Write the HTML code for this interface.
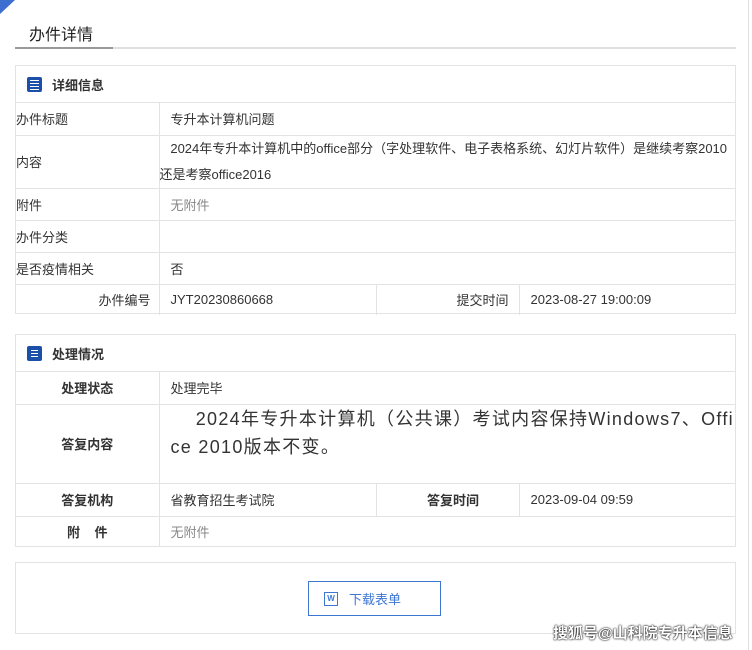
<!DOCTYPE html>
<html><head><meta charset="utf-8"><style>
*{margin:0;padding:0;box-sizing:border-box}
body{width:752px;height:650px;background:#fff;font-family:"Liberation Sans","Noto Sans CJK SC",sans-serif;font-size:13px;color:#333;position:relative;overflow:hidden}
.abs{position:absolute}
.panel{position:absolute;left:15px;width:721px;border:1px solid #e3e3e3}
.hd{height:37px;border-bottom:1px solid #e3e3e3;display:flex;align-items:center;padding-left:11px;font-weight:bold;font-size:13px;color:#333}
.ic{width:15px;height:15px;background:#1b4fa8;border-radius:2px;margin-right:10px;position:relative}
.ic i{position:absolute;left:3px;width:9px;height:1.5px;background:#fff}
table{border-collapse:collapse;width:100%;table-layout:fixed}
td{border-top:1px solid #e3e3e3;border-left:1px solid #e3e3e3;padding:0 0 0 11px;vertical-align:middle}
td:first-child{border-left:none;padding-left:0}
tr:first-child td{border-top:none}
.b td:first-child{font-weight:bold;text-align:center;color:#333}
.g{color:#888}
</style></head><body>
<div class="abs" style="left:0;top:0;width:0;height:0;border-top:14px solid #3d6fd1;border-right:15px solid transparent"></div>
<div class="abs" style="right:3px;top:0;width:1px;height:650px;background:#e0e0e0"></div>
<div class="abs" style="left:29px;top:21px;font-size:16px;color:#222">办件详情</div>
<div class="abs" style="left:15px;top:47px;width:721px;height:2px;background:#e0e0e0"></div>
<div class="abs" style="left:15px;top:47px;width:98px;height:2px;background:#999"></div>

<div class="panel" style="top:65px;height:249px">
<div class="hd"><div class="ic"><i style="top:3px"></i><i style="top:6px"></i><i style="top:9px"></i><i style="top:12px;height:1px"></i></div>详细信息</div>
<table>
<colgroup><col style="width:143px"><col style="width:217px"><col style="width:143px"><col></colgroup>
<tr style="height:32px"><td>办件标题</td><td colspan="3">专升本计算机问题</td></tr>
<tr style="height:51px"><td>内容</td><td colspan="3" style="padding:0;line-height:26px">&nbsp;&nbsp;&nbsp;2024年专升本计算机中的office部分（字处理软件、电子表格系统、幻灯片软件）是继续考察2010还是考察office2016</td></tr>
<tr style="height:32px"><td>附件</td><td colspan="3" class="g">无附件</td></tr>
<tr style="height:32px"><td>办件分类</td><td colspan="3"></td></tr>
<tr style="height:32px"><td>是否疫情相关</td><td colspan="3">否</td></tr>
<tr style="height:31px"><td style="text-align:right;padding-right:8px">办件编号</td><td>JYT20230860668</td><td style="text-align:right;padding-right:10px">提交时间</td><td>2023-08-27 19:00:09</td></tr>
</table></div>

<div class="panel" style="top:334px;height:213px">
<div class="hd"><div class="ic"><i style="top:4px;left:4px;width:7px"></i><i style="top:7px;left:4px;width:7px"></i><i style="top:10px;left:4px;width:7px"></i></div>处理情况</div>
<table class="b">
<colgroup><col style="width:143px"><col style="width:217px"><col style="width:143px"><col></colgroup>
<tr style="height:32px"><td>处理状态</td><td colspan="3">处理完毕</td></tr>
<tr style="height:79px"><td>答复内容</td><td colspan="3" style="vertical-align:top;font-size:18px;line-height:28px;padding:0 0 0 11px;word-break:break-all;letter-spacing:1.3px">&nbsp;&nbsp;&nbsp;&nbsp;2024年专升本计算机（公共课）考试内容保持Windows7、Office 2010版本不变。</td></tr>
<tr style="height:33px"><td>答复机构</td><td>省教育招生考试院</td><td style="font-weight:bold;text-align:center">答复时间</td><td>2023-09-04 09:59</td></tr>
<tr style="height:31px"><td>附&nbsp;&nbsp;&nbsp;&nbsp;件</td><td colspan="3" class="g">无附件</td></tr>
</table></div>

<div class="panel" style="top:562px;height:72px"></div>
<div class="abs" style="left:308px;top:581px;width:133px;height:35px;border:1px solid #3d77d4;display:flex;align-items:center;padding-left:15px;color:#3d77d4">
<span style="width:14px;height:14px;border:1px solid #3d77d4;font-size:8px;font-weight:bold;display:inline-flex;align-items:center;justify-content:center;margin-right:11px">W</span>下载表单</div>
<div class="abs" style="left:553px;top:622px;font-size:15px;font-weight:bold;color:#fff;text-shadow:0 0 2px #000,0 0 1px #000">搜狐号@山科院专升本信息</div>
</body></html>
